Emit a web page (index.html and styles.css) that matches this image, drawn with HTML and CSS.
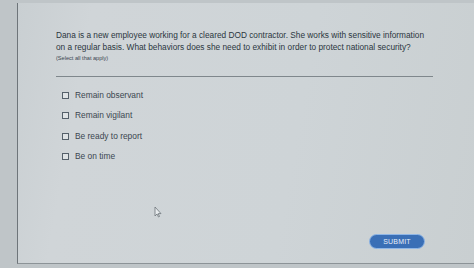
FILE: index.html
```
<!DOCTYPE html>
<html>
<head>
<meta charset="utf-8">
<link rel="stylesheet" href="styles.css">
</head>
<body>
<div class="screen">
  <div class="panel">
    <div class="question">
      <p class="q">Dana is a new employee working for a cleared DOD contractor. She works with sensitive information on a regular basis. What behaviors does she need to exhibit in order to protect national security?</p>
      <p class="hint">(Select all that apply)</p>
    </div>
    <div class="rule"></div>
    <ul class="options">
      <li><span class="box"></span>Remain observant</li>
      <li><span class="box"></span>Remain vigilant</li>
      <li><span class="box"></span>Be ready to report</li>
      <li><span class="box"></span>Be on time</li>
    </ul>
    <div class="footer">
      <button class="submit">SUBMIT</button>
    </div>
    <svg class="cursor" width="8" height="12" viewBox="0 0 8 12"><path d="M1 1 L1 10 L3 8 L4.5 11 L5.5 10.5 L4.2 7.6 L7 7.6 Z" fill="#e8ecee" stroke="#6c7378" stroke-width="0.8"/></svg>
  </div>
</div>
</body>
</html>
```
FILE: styles.css
```
html, body {
  margin: 0;
  padding: 0;
}
body {
  width: 474px;
  height: 268px;
  overflow: hidden;
  background: #bfc5c8;
  font-family: "Liberation Sans", Arial, sans-serif;
}
.screen {
  padding: 3px 0 0 17px;
  height: 268px;
  box-sizing: border-box;
}
.panel {
  position: relative;
  height: 261px;
  box-sizing: border-box;
  background: linear-gradient(100deg, #c9cfd2 0%, #d0d5d8 15%, #ced4d7 60%, #c9cfd1 100%);
  border-left: 1px solid #6e757a;
  border-bottom: 1px solid #8c9397;
  display: flex;
  flex-direction: column;
  padding: 27px 0 0 38px;
}
.question {
  width: 378px;
}
.q {
  margin: 0;
  font-size: 8.3px;
  line-height: 11.5px;
  color: #2b3640;
}
.hint {
  margin: 1px 0 0;
  font-size: 5.6px;
  line-height: 9px;
  color: #3a4550;
}
.rule {
  margin-top: 13px;
  width: 377px;
  height: 1px;
  background: #7f878c;
}
.options {
  list-style: none;
  margin: 13px 0 0;
  padding: 0 0 0 6px;
  display: flex;
  flex-direction: column;
  gap: 9.3px;
}
.options li {
  display: flex;
  align-items: center;
  font-size: 8.4px;
  line-height: 11px;
  color: #3b4650;
}
.box {
  width: 5px;
  height: 5px;
  border: 1px solid #55606a;
  background: #dfe3e5;
  margin-right: 6px;
}
.footer {
  margin-top: auto;
  display: flex;
  justify-content: flex-end;
  padding: 0 49px 14px 0;
}
.submit {
  border: 1px solid #8fb6e6;
  background: #3a6fb6;
  color: #e6eef8;
  font-family: "Liberation Sans", Arial, sans-serif;
  font-size: 7px;
  width: 56px;
  height: 15px;
  border-radius: 8px;
  padding: 0;
  letter-spacing: 0.2px;
}
.cursor {
  position: absolute;
  left: 136px;
  top: 203px;
}
```
